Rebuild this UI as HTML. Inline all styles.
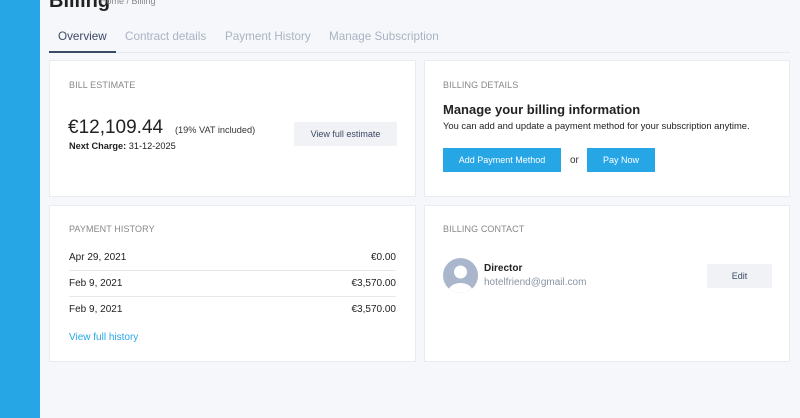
<!DOCTYPE html>
<html><head><style>
*{margin:0;padding:0;box-sizing:border-box}
body{width:800px;height:418px;overflow:hidden;background:#f5f7fb;font-family:"Liberation Sans",sans-serif;position:relative;color:#222}
.a{position:absolute;white-space:nowrap}
.side{left:0;top:0;width:40px;height:418px;background:#27a6e6}
.card{position:absolute;background:#fff;border:1px solid #e8ebf0}
.lbl{font-size:9px;color:#888;letter-spacing:.1px}
.btn{position:absolute;font-size:9px;text-align:center}
.row{position:absolute;left:19px;right:19px;font-size:10px;border-bottom:1px solid #e6e8ec;height:26px;line-height:26px}
.row span{float:right}
</style></head><body>
<div class="a side"></div>
<div class="a" style="left:49px;top:-10px;font-size:20px;font-weight:bold;color:#222">Billing</div>
<div class="a" style="left:100px;top:-4px;font-size:9px;color:#888">Home / Billing</div>
<div class="a" style="left:58px;top:30px;font-size:11.7px;color:#3d4a63">Overview</div>
<div class="a" style="left:125px;top:30px;font-size:11.7px;color:#aab3c2">Contract details</div>
<div class="a" style="left:225px;top:30px;font-size:11.7px;color:#aab3c2">Payment History</div>
<div class="a" style="left:329px;top:30px;font-size:11.7px;color:#aab3c2">Manage Subscription</div>
<div class="a" style="left:49px;top:52px;width:741px;height:1px;background:#e6e9ee"></div>
<div class="a" style="left:49px;top:51px;width:67px;height:2px;background:#3d4a63"></div>

<div class="card" style="left:49px;top:60px;width:367px;height:137px">
<div class="a lbl" style="left:19px;top:19px">BILL ESTIMATE</div>
<div class="a" style="left:18px;top:56px;font-size:19px;color:#222">€12,109.44</div>
<div class="a" style="left:125px;top:64px;font-size:9.2px;color:#333">(19% VAT included)</div>
<div class="a" style="left:19px;top:80px;font-size:9.2px;color:#222"><b>Next Charge:</b> 31-12-2025</div>
<div class="btn" style="left:244px;top:61px;width:103px;height:24px;line-height:24px;background:#f0f2f5;color:#3d4a63">View full estimate</div>
</div>

<div class="card" style="left:424px;top:60px;width:366px;height:137px">
<div class="a lbl" style="left:18px;top:19px">BILLING DETAILS</div>
<div class="a" style="left:18px;top:41px;font-size:13px;font-weight:bold;color:#222">Manage your billing information</div>
<div class="a" style="left:18px;top:59px;font-size:9.4px;color:#222">You can add and update a payment method for your subscription anytime.</div>
<div class="btn" style="left:18px;top:87px;width:118px;height:24px;line-height:24px;background:#27a6e6;color:#fff">Add Payment Method</div>
<div class="a" style="left:145px;top:94px;font-size:10px;color:#333">or</div>
<div class="btn" style="left:162px;top:87px;width:68px;height:24px;line-height:24px;background:#27a6e6;color:#fff">Pay Now</div>
</div>

<div class="card" style="left:49px;top:205px;width:367px;height:157px">
<div class="a lbl" style="left:19px;top:18px">PAYMENT HISTORY</div>
<div class="row" style="top:39px">Apr 29, 2021<span>€0.00</span></div>
<div class="row" style="top:65px">Feb 9, 2021<span>€3,570.00</span></div>
<div class="row" style="top:91px;border:none">Feb 9, 2021<span>€3,570.00</span></div>
<div class="a" style="left:19px;top:126px;font-size:10px;color:#27a6e6">View full history</div>
</div>

<div class="card" style="left:424px;top:205px;width:366px;height:157px">
<div class="a lbl" style="left:18px;top:18px">BILLING CONTACT</div>
<svg class="a" style="left:18px;top:52px" width="35" height="35" viewBox="0 0 35 35"><defs><clipPath id="c"><circle cx="17.5" cy="17.5" r="17.5"/></clipPath></defs><circle cx="17.5" cy="17.5" r="17.5" fill="#a9b6cc"/><g clip-path="url(#c)" fill="#fff"><circle cx="17.5" cy="14" r="6.5"/><ellipse cx="17.5" cy="33" rx="12" ry="8"/></g></svg>
<div class="a" style="left:59px;top:57px;font-size:10px;font-weight:bold;color:#222">Director</div>
<div class="a" style="left:59px;top:71px;font-size:10px;color:#8a93a3">hotelfriend@gmail.com</div>
<div class="btn" style="left:282px;top:58px;width:65px;height:24px;line-height:24px;background:#f0f2f5;color:#3d4a63">Edit</div>
</div>
</body></html>
